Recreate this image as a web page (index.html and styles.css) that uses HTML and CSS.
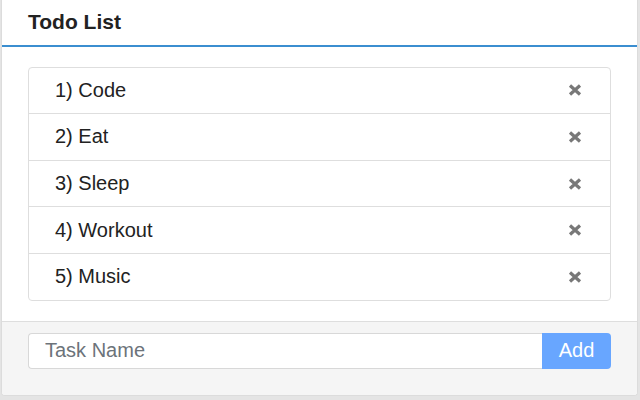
FILE: index.html
```html
<!DOCTYPE html>
<html lang="en">
<head>
    <meta charset="UTF-8">
    <meta name="viewport" content="width=device-width, initial-scale=1.0">
    <title>Todo List</title>
    <link rel="stylesheet" href="styles.css">
</head>
<body>
    <div class="card">
        <div class="card-header">Todo List</div>
        <div class="card-body">
            <ul class="todo-list">
                <li class="todo-item"><span>1) Code</span><svg class="remove" viewBox="0 0 14 12"><path d="M2 1.5L12 10.5M12 1.5L2 10.5"/></svg></li>
                <li class="todo-item"><span>2) Eat</span><svg class="remove" viewBox="0 0 14 12"><path d="M2 1.5L12 10.5M12 1.5L2 10.5"/></svg></li>
                <li class="todo-item"><span>3) Sleep</span><svg class="remove" viewBox="0 0 14 12"><path d="M2 1.5L12 10.5M12 1.5L2 10.5"/></svg></li>
                <li class="todo-item"><span>4) Workout</span><svg class="remove" viewBox="0 0 14 12"><path d="M2 1.5L12 10.5M12 1.5L2 10.5"/></svg></li>
                <li class="todo-item"><span>5) Music</span><svg class="remove" viewBox="0 0 14 12"><path d="M2 1.5L12 10.5M12 1.5L2 10.5"/></svg></li>
            </ul>
        </div>
        <div class="card-footer">
            <input type="text" class="task-input" placeholder="Task Name">
            <button class="add-btn">Add</button>
        </div>
    </div>
</body>
</html>
```

FILE: styles.css
```css
html, body {
    margin: 0;
    height: 100%;
}
body {
    font-family: "Liberation Sans", Arial, sans-serif;
    background-color: #e4e4e4;
    color: #222;
    padding: 0 2px 4px 1px;
    box-sizing: border-box;
}
.card {
    height: 396px;
    display: flex;
    flex-direction: column;
    background-color: #fff;
    border: 1px solid #dcdcdc;
    border-top: none;
    border-radius: 0 0 4px 4px;
    box-sizing: border-box;
    overflow: hidden;
}
.card-header {
    height: 45px;
    padding-left: 26px;
    display: flex;
    align-items: center;
    font-size: 21px;
    font-weight: bold;
    color: #222;
    border-bottom: 2px solid #3b8ed0;
}
.card-body {
    flex: 1;
    padding: 20px 26px;
}
.todo-list {
    list-style: none;
    margin: 0;
    padding: 0;
    border: 1px solid #dedede;
    border-radius: 4px;
}
.todo-item {
    height: 45.6px;
    padding: 0 28px 0 26px;
    display: flex;
    align-items: center;
    justify-content: space-between;
    font-size: 20px;
    color: #222;
}
.todo-item + .todo-item {
    border-top: 1px solid #dedede;
}
.remove {
    width: 14px;
    height: 12px;
    fill: none;
    stroke: #787878;
    stroke-width: 3.2;
    cursor: pointer;
}
.card-footer {
    height: 75px;
    padding: 11px 26px 0;
    display: flex;
    align-items: flex-start;
    background-color: #f5f5f5;
    border-top: 1px solid #dedede;
    box-sizing: border-box;
}
.task-input {
    flex: 1;
    height: 36px;
    padding: 0 16px;
    font-family: inherit;
    font-size: 20px;
    border: 1px solid #d8d8d8;
    border-right: none;
    border-radius: 4px 0 0 4px;
    box-sizing: border-box;
    outline: none;
}
.task-input::placeholder {
    color: #6c737a;
}
.add-btn {
    width: 69px;
    height: 36px;
    font-family: inherit;
    font-size: 20px;
    color: #fff;
    background-color: #68a6ff;
    border: none;
    border-radius: 0 4px 4px 0;
    cursor: pointer;
}
```
